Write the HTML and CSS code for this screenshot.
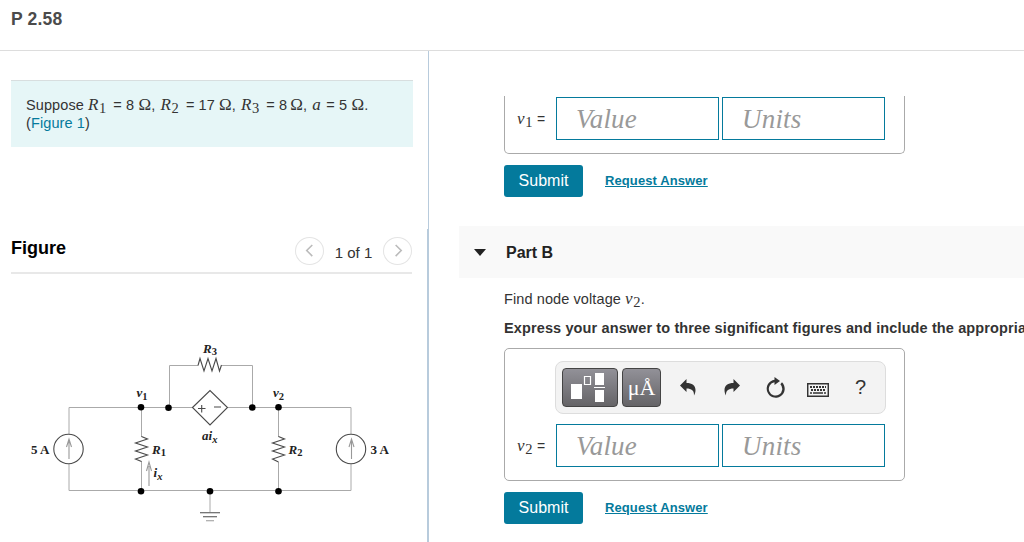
FILE: index.html
```html
<!DOCTYPE html>
<html lang="en">
<head>
<meta charset="utf-8">
<title>P 2.58</title>
<link rel="stylesheet" href="styles.css">
</head>
<body>
<header class="page-head"><h1>P 2.58</h1></header>
<div class="columns">
  <aside class="left">
    <section class="intro">
      <div class="given">
        <p class="equation">
          <span class="w-suppose">Suppose</span>
          <span class="w-r"><i>R</i><sub>1</sub></span><span class="w-eq">= 8</span><span class="w-ohm"><b>Ω</b>,</span>
          <span class="w-r"><i>R</i><sub>2</sub></span><span class="w-eq-wide">= 17</span><span class="w-ohm"><b>Ω</b>,</span>
          <span class="w-r"><i>R</i><sub>3</sub></span><span class="w-eq-tight">= 8</span><span class="w-ohm"><b>Ω</b>,</span>
          <span class="w-a"><i>a</i></span><span class="w-eq">= 5</span><span class="w-ohm"><b>Ω</b>.</span>
        </p>
        <p>(<a href="#figure">Figure 1</a>)</p>
      </div>
    </section>
    <section class="figure" id="figure">
      <div class="figure-head">
        <h2>Figure</h2>
        <div class="pager">
          <button class="round" aria-label="Previous"><svg viewBox="0 0 28 28"><path d="M17 7.500 11 13.500l6 6"/></svg></button>
          <span>1 of 1</span>
          <button class="round" aria-label="Next"><svg viewBox="0 0 28 28"><path d="m12 7.500 6 6-6 6"/></svg></button>
        </div>
      </div>
      <svg class="circuit" viewBox="0 274 412 268" width="412" height="268">
        <g class="wire">
          <path d="M69 434V407.500H192.500M228 407.500H351V434M69 464V490.500H351V464"/>
          <path d="M169.500 407V365.500H198M222 365.500H252.500V407"/>
          <path d="M141.500 407V437M141.500 461V490M278.500 407V437M278.500 462V490M210 490V512"/>
        </g>
        <g class="part">
          <circle cx="68.500" cy="449" r="14.700"/>
          <circle cx="351" cy="449" r="14.700"/>
          <path d="M192.500 407.500 210 390.500l17.500 17L210 425z"/>
          <path d="m198 365.500 2-7 4 12.500 4-12.500 4 12.500 4-12.500 3.500 12.500 2-6"/>
          <path d="m141.500 436.500 6 2.500-12 4 12 4-12 4 12 4-12 4 6 2.500"/>
          <path d="m278.500 436.500 6 2.500-12 4 12 4-12 4 12 4-12 4 6 3"/>
          <path d="M198 408.500h7.500M201.700 405v7.500M214 407h7"/>
          <path d="M200 512.800h20M203 516.700h14"/>
        </g>
        <g class="arrow">
          <path d="M69 459v-18m-2.500 6 2.500-8 2.500 8M351.500 459v-18m-2.500 6 2.500-8 2.500 8M149 486v-20m-2.500 5 2.500-9 2.500 9M206 520.800h8"/>
        </g>
        <g class="node">
          <circle cx="141" cy="407.300" r="3.300"/><circle cx="168.500" cy="407.700" r="3.300"/>
          <circle cx="252.300" cy="407.500" r="3.300"/><circle cx="278.500" cy="407.300" r="3.300"/>
          <circle cx="141" cy="491.200" r="3.300"/><circle cx="210" cy="491.200" r="3.300"/><circle cx="278.500" cy="491.200" r="3.300"/>
        </g>
        <g class="label">
          <text x="31" y="454">5 A</text><text x="370.500" y="454">3 A</text>
          <text x="203" y="353"><tspan class="it">R</tspan><tspan class="low" dy="2">3</tspan></text>
          <text x="152" y="454"><tspan class="it">R</tspan><tspan class="low" dy="2">1</tspan></text>
          <text x="288.500" y="454"><tspan class="it">R</tspan><tspan class="low" dy="2">2</tspan></text>
          <text x="136.500" y="397"><tspan class="it">v</tspan><tspan class="low" dy="3">1</tspan></text>
          <text x="273" y="397"><tspan class="it">v</tspan><tspan class="low" dy="3">2</tspan></text>
          <text x="202" y="440"><tspan class="it">ai</tspan><tspan class="low it" dy="2.500">x</tspan></text>
          <text x="153.500" y="477"><tspan class="it">i</tspan><tspan class="low it" dy="2.500">x</tspan></text>
        </g>
      </svg>
    </section>
  </aside>
  <main class="right">
    <div class="answer answer-cut">
      <div class="fields">
        <label><i>v</i><sub>1</sub> =</label>
        <input placeholder="Value" aria-label="Value"><input placeholder="Units" aria-label="Units">
      </div>
    </div>
    <div class="actions"><button class="submit">Submit</button><a href="#">Request Answer</a></div>
    <div class="part-head"><span class="caret"></span><h3>Part B</h3></div>
    <p class="question">Find node voltage <span class="math"><i>v</i><sub>2</sub></span>.</p>
    <p class="hint">Express your answer to three significant figures and include the appropriate units.</p>
    <div class="answer">
      <div class="toolbar">
        <button class="dark template" aria-label="Templates"><svg viewBox="0 0 56 38" width="56" height="38"><path class="solid" d="M9 15h11v15H9zM33 4h9v12h-9zM33 21h9v12h-9z"/><path class="line" d="M22.500 7.500h6v8h-6zM32 18.500h11"/></svg></button>
        <button class="dark units">μÅ</button>
        <svg class="tool undo" viewBox="0 0 16 17" width="16" height="17"><path d="M0 6.500 6.500 0v4C12 4 15.500 6.500 15.500 11c0 2-.6 4-1.500 5.500.3-5-2.500-7-7.500-7V13z"/></svg>
        <svg class="tool redo" viewBox="0 0 16 17" width="16" height="17"><path d="M16 6.500 9.500 0v4C4 4 .5 6.500.5 11c0 2 .6 4 1.500 5.500-.3-5 2.500-7 7.500-7V13z"/></svg>
        <svg class="tool reset" viewBox="0 0 20 21" width="20" height="21"><path d="M9.500 0v2.800A9 9 0 1 0 17 5.300L15.400 7.200A6.700 6.700 0 1 1 9.500 5.200V8l5.500-4z"/></svg>
        <svg class="tool keys" viewBox="0 0 22 14" width="22" height="14"><path class="line" d="M.7.700h20.600v12.600H.7z"/><path class="dots" d="M3 4h16M4 7h15"/><path class="line" d="M6 10h10M3 10h2M17 10h2"/></svg>
        <span class="help">?</span>
      </div>
      <div class="fields">
        <label><i>v</i><sub>2</sub> =</label>
        <input placeholder="Value" aria-label="Value"><input placeholder="Units" aria-label="Units">
      </div>
    </div>
    <div class="actions"><button class="submit">Submit</button><a href="#">Request Answer</a></div>
  </main>
</div>
</body>
</html>
```
FILE: styles.css
```css
* { box-sizing: border-box; }
body { margin: 0; height: 542px; overflow: hidden; background: #fff; color: #333; font: 14px/19px "Liberation Sans", Arial, sans-serif; }
h1, h2, h3, p { margin: 0; }
button { padding: 0; font-family: inherit; }
i { font-family: "Liberation Serif", serif; line-height: 0; }
sub { margin-left: .5px; font-family: "Liberation Serif", serif; line-height: 0; vertical-align: -3px; }
a { color: #047a9c; }

.page-head { height: 51px; border-bottom: 1px solid #ddd; padding: 9px 11px; }
.page-head h1 { font-size: 17.500px; line-height: 21px; letter-spacing: .2px; color: #4b4b4b; }
.columns { display: flex; height: 491px; }
.left { width: 429px; flex: none; }

.intro { height: 178px; padding: 29px 15px 0 11px; border-right: 1px solid #b8cbdc; }
.given { width: 402px; height: 67px; padding: 15px 15px 0; background: #e6f6f7; border-top: 1px solid #d8dedf; font-size: 14.500px; letter-spacing: .1px; }
.given a { text-decoration: none; }
.equation { display: flex; height: 18px; }
.equation span { flex: none; white-space: nowrap; }
.equation i { font-size: 17px; }
.equation sub { font-size: 14.500px; }
.equation b { font: 17px/0 "Liberation Serif", serif; }
.w-suppose { width: 62px; }
.w-r, .w-eq { width: 25.300px; }
.w-eq-wide { width: 33px; }
.w-eq-tight { width: 24px; }
.w-ohm { width: 22px; }
.w-a { width: 14px; }

.figure { height: 313px; border-right: 2px solid #b8cbdc; }
.figure-head { display: flex; justify-content: space-between; margin-left: 11px; width: 401px; height: 45px; padding-top: 8px; border-bottom: 2px solid #e8e8e8; }
.figure h2 { color: #000; font-size: 18px; line-height: 22px; }
.pager { display: flex; height: 28px; font-size: 15px; }
.pager span { width: 59px; text-align: center; line-height: 31px; }
.round { width: 29px; height: 28px; border: 1px solid #e4e4e4; border-radius: 50%; background: #fff; }
.round svg { display: block; width: 27px; height: 26px; fill: none; stroke: #bbb; stroke-width: 1.700; }

.circuit { display: block; font: bold 13px "Liberation Serif", serif; }
.wire { fill: none; stroke: #aaa; }
.part { fill: none; stroke: #4a4a4a; stroke-width: 1.100; }
.arrow { fill: none; stroke: #999; stroke-width: 1.100; }
.node { fill: #000; }
.label { fill: #222; }
.it { font-style: italic; }
.low { font-size: 10.500px; }

.right { flex: 1; min-width: 0; padding: 45px 0 0 75px; overflow: hidden; }
.answer { width: 401px; height: 133px; padding: 12px 19px 0 12px; border: 1px solid #aaa; border-radius: 5px; }
.answer-cut { height: 58px; padding-top: 1px; border-top: 0; border-radius: 0 0 5px 5px; }
.fields { display: flex; align-items: center; gap: 3px; height: 43px; }
.fields label { width: 36px; padding-top: 2px; font-size: 14px; white-space: nowrap; letter-spacing: .3px; }
.fields label i { font-size: 17px; }
.fields label sub, .math sub { font-size: 14.500px; }
.fields input { width: 163px; height: 43px; min-width: 0; padding: 2px 19px 0; border: 1.500px solid #047a9c; border-radius: 0; background: #fff; font: italic 27px "Liberation Serif", serif; letter-spacing: .2px; }
.fields input::placeholder { color: #999; opacity: 1; }
.actions { display: flex; align-items: center; gap: 22px; height: 32px; margin-top: 11px; }
.submit { width: 79px; height: 32px; border: 0; border-radius: 3px; background: #047a9c; color: #fff; font-size: 16px; }
.actions a { padding-bottom: 2px; font-size: 13px; font-weight: bold; letter-spacing: .1px; }
.part-head { display: flex; align-items: center; height: 52px; margin: 29px 0 0 -45px; padding-left: 15px; background: #f9f9f9; }
.caret { border: 6px solid transparent; border-top: 7px solid #222; border-bottom: 0; }
.part-head h3 { margin-left: 20px; font-size: 16px; color: #222; }
.question { height: 20px; margin-top: 12px; font-size: 14.500px; letter-spacing: .1px; }
.math i { font-size: 17px; }
.hint { width: 700px; height: 20px; margin: 9px 0 9px; white-space: nowrap; font-size: 14.500px; font-weight: bold; letter-spacing: .12px; }

.toolbar { display: flex; align-items: center; width: 331px; height: 53px; margin: 0 0 10px 38px; padding-left: 6px; border: 1px solid #ddd; border-radius: 8px; background: #f3f3f3; }
.dark { display: block; height: 39px; border: 1px solid #444; border-radius: 4px; background: linear-gradient(#929198, #656467); color: #fff; }
.template { width: 56px; }
.template svg { display: block; margin: -1px; }
.units { width: 39px; margin-left: 4px; font: 22px "Liberation Serif", serif; }
.tool { fill: #333; flex: none; }
.undo { margin-left: 19px; }
.redo { margin-left: 28px; }
.reset { margin-left: 25px; }
.keys { margin: 4px 0 0 22px; }
.solid { fill: #fff; }
.template .line { fill: none; stroke: #fff; stroke-width: 1.200; }
.keys .line { fill: none; stroke: #333; stroke-width: 1.500; }
.dots { fill: none; stroke: #333; stroke-width: 1.800; stroke-dasharray: 2 1; }
.help { margin-left: 26px; font: 20px "Liberation Sans", sans-serif; }
```
